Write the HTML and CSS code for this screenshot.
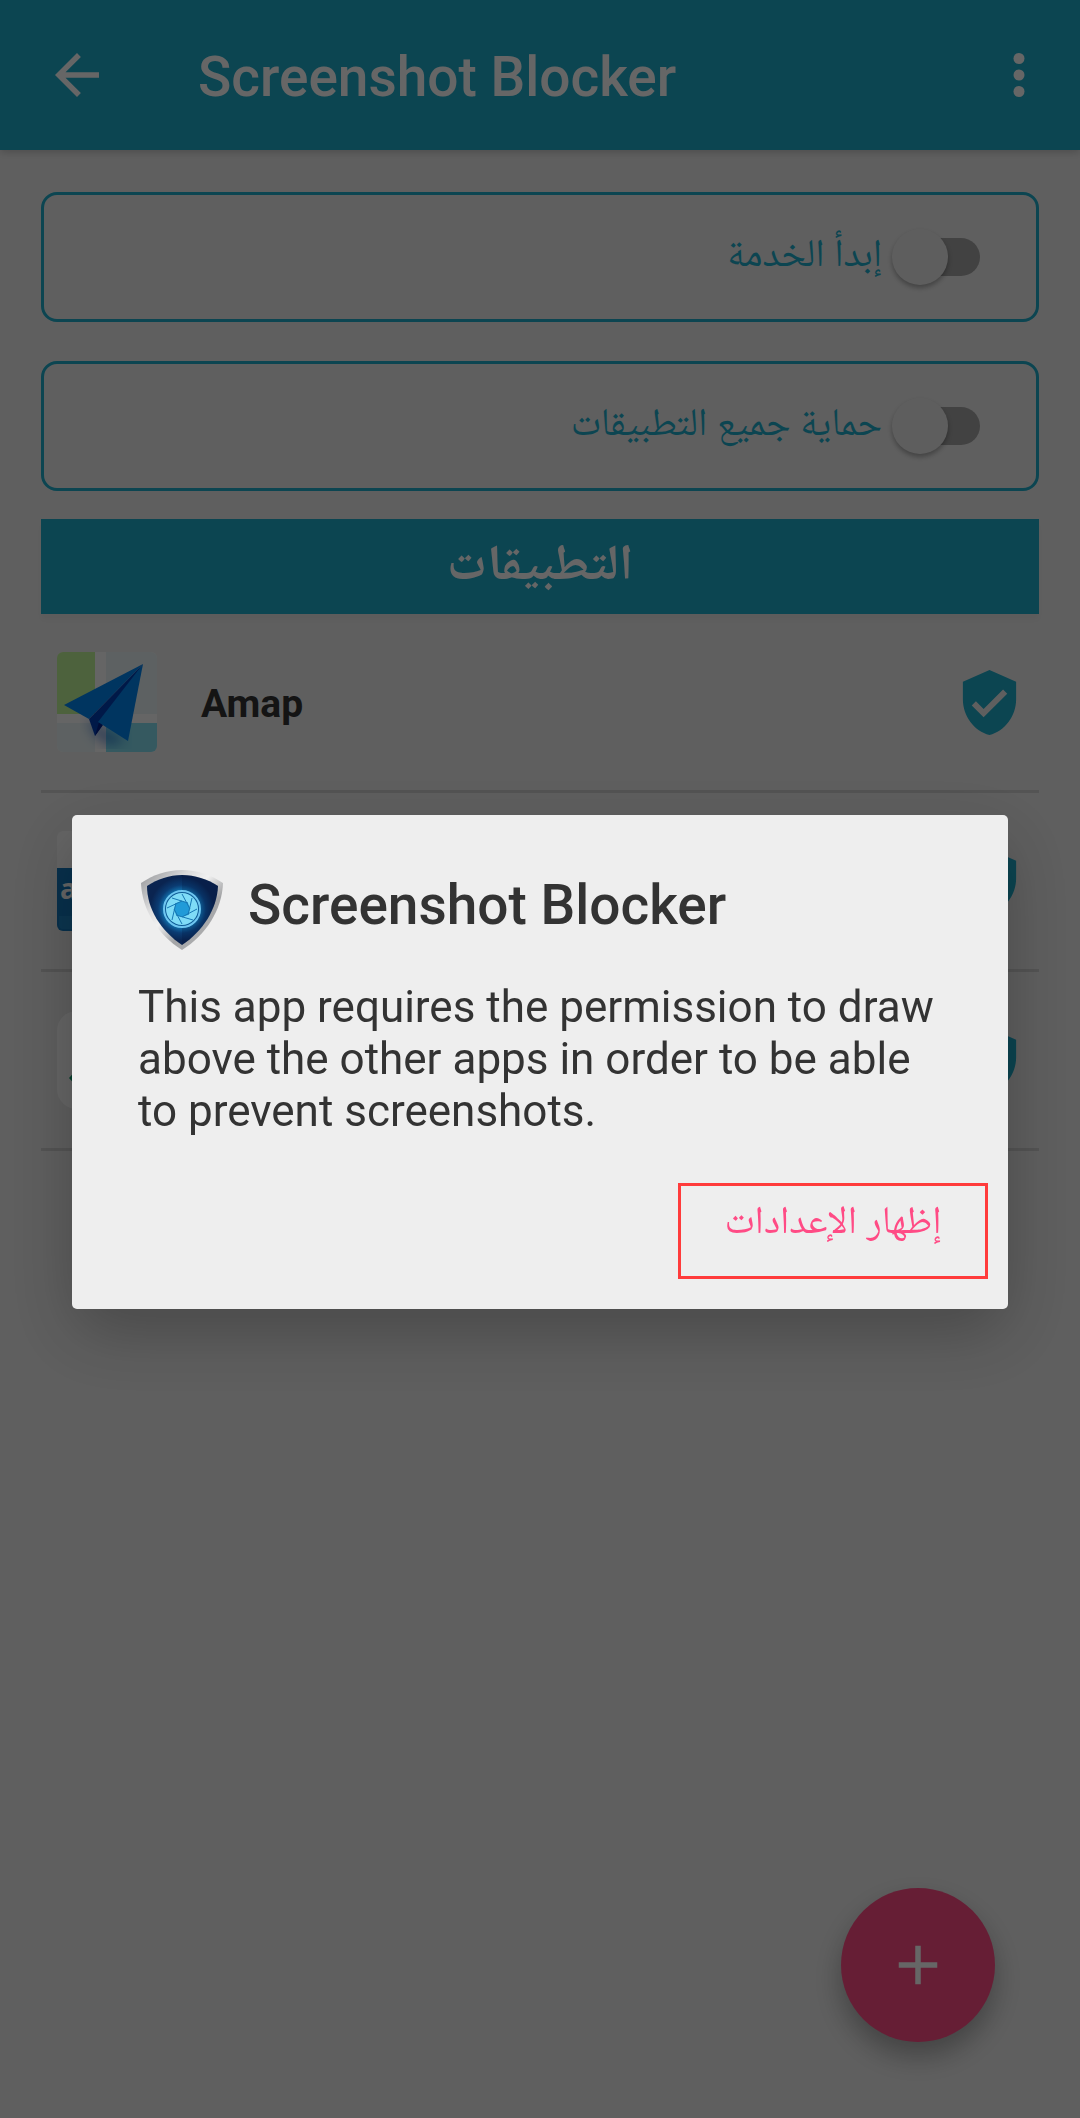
FILE: index.html
```html
<!DOCTYPE html>
<html lang="ar">
  <head>
    <meta charset="UTF-8" />
    <meta name="viewport" content="width=device-width, initial-scale=1.0" />
    <title>Screenshot Blocker</title>
    <link rel="stylesheet" href="styles.css">
  </head>
  <body>
    <header class="app-bar">
      <button type="button" class="icon-button" aria-label="Back">
        <svg viewBox="0 0 24 24"><path d="M20 11H7.83l5.59-5.59L12 4l-8 8 8 8 1.41-1.41L7.83 13H20v-2z" /></svg>
      </button>
      <h1>Screenshot Blocker</h1>
      <button type="button" class="icon-button" aria-label="More options">
        <svg viewBox="0 0 24 24">
          <circle cx="12" cy="6" r="2" />
          <circle cx="12" cy="12" r="2" />
          <circle cx="12" cy="18" r="2" />
        </svg>
      </button>
    </header>

    <main class="content">
      <div class="options">
        <label class="option" dir="rtl">
          <input type="checkbox" class="switch" />
          <span>إبدأ الخدمة</span>
        </label>
        <label class="option" dir="rtl">
          <input type="checkbox" class="switch" />
          <span>حماية جميع التطبيقات</span>
        </label>
      </div>

      <h2 class="section-title" dir="rtl">التطبيقات</h2>

      <ul class="app-list">
        <li class="app-row">
          <svg class="app-icon" viewBox="0 0 100 100">
            <defs>
              <clipPath id="amap-clip"><rect width="100" height="100" rx="6" /></clipPath>
              <filter id="amap-blur"><feGaussianBlur stdDeviation="6" /></filter>
            </defs>
            <g clip-path="url(#amap-clip)">
              <rect width="100" height="100" fill="#fcfcfc" />
              <rect width="38" height="62" fill="#c1f499" />
              <rect x="49" width="51" height="62" fill="#e8f3f5" />
              <rect y="71" width="38" height="29" fill="#e8f3f5" />
              <rect x="49" y="71" width="51" height="29" fill="#84dff0" />
              <path d="M28 66L70 88L52 94L38 84z" fill="#0048b8" opacity=".5" filter="url(#amap-blur)" />
              <path d="M86 12L7 53L32 67z" fill="#0084f0" />
              <path d="M86 12L32 67L38 84L46 72z" fill="#0040b4" />
              <path d="M38 84L42 70L46 73z" fill="#001f8c" />
              <path d="M86 12L41 70L71 89z" fill="#0084f0" />
            </g>
          </svg>
          <span class="app-name">Amap</span>
          <svg class="shield" viewBox="0 0 24 24"><path d="M12 1L3 5v6c0 5.550 3.840 10.740 9 12 5.160-1.260 9-6.450 9-12V5l-9-4zm-2 16l-4-4 1.410-1.410L10 14.170l6.590-6.590L18 9l-8 8z" /></svg>
        </li>
        <li class="app-row">
          <svg class="app-icon" viewBox="0 0 100 100">
            <path d="M0 37V6a6 6 0 0 1 6-6h88a6 6 0 0 1 6 6v31z" fill="#fcfcfc" />
            <path d="M0 37h100v57a6 6 0 0 1-6 6H6a6 6 0 0 1-6-6z" fill="#1379be" />
            <path d="M2 85h96v9a4 4 0 0 1-4 4H6a4 4 0 0 1-4-4z" fill="#1d86c8" />
            <text class="app-icon-text" x="3" y="68">a</text>
          </svg>
          <span class="app-name"></span>
          <svg class="shield" viewBox="0 0 24 24"><path d="M12 1L3 5v6c0 5.550 3.840 10.740 9 12 5.160-1.260 9-6.450 9-12V5l-9-4zm-2 16l-4-4 1.410-1.410L10 14.170l6.590-6.590L18 9l-8 8z" /></svg>
        </li>
        <li class="app-row">
          <svg class="app-icon" viewBox="0 0 100 100">
            <rect y="1" width="100" height="98" rx="20" fill="#ffffff" />
            <path d="M12 68L30 48V88z" fill="#10a070" />
          </svg>
          <span class="app-name"></span>
          <svg class="shield" viewBox="0 0 24 24"><path d="M12 1L3 5v6c0 5.550 3.840 10.740 9 12 5.160-1.260 9-6.450 9-12V5l-9-4zm-2 16l-4-4 1.410-1.410L10 14.170l6.590-6.590L18 9l-8 8z" /></svg>
        </li>
      </ul>
    </main>

    <button type="button" class="fab" aria-label="Add">
      <svg viewBox="0 0 24 24"><path d="M19 13h-6v6h-2v-6H5v-2h6V5h2v6h6v2z" /></svg>
    </button>

    <div class="scrim">
      <section class="dialog" role="dialog" aria-modal="true" aria-labelledby="dialog-title">
        <div class="dialog-header">
          <svg class="dialog-icon" viewBox="0 0 82 80">
            <defs>
              <linearGradient id="rim" x1="0" y1="0" x2="1" y2="1">
                <stop offset="0" stop-color="#8f9194" />
                <stop offset=".3" stop-color="#dcdcdd" />
                <stop offset=".45" stop-color="#f1f1f1" />
                <stop offset=".65" stop-color="#a3a4a6" />
                <stop offset="1" stop-color="#b9babb" />
              </linearGradient>
              <radialGradient id="glow" cx="41" cy="39" r="32" gradientUnits="userSpaceOnUse">
                <stop offset=".5" stop-color="#1384c2" />
                <stop offset=".75" stop-color="#0b3c73" />
                <stop offset="1" stop-color="#0a2450" />
              </radialGradient>
            </defs>
            <path d="M41 0C56 0 70 5 82 13C81 40 65 65 41 80C17 65 1 40 0 13C12 5 26 0 41 0z" fill="url(#rim)" />
            <path d="M41 5C54 5 66 9 77 16C76 39 62 61 41 75C20 61 6 39 6 16C17 9 28 5 41 5z" fill="url(#glow)" />
            <path d="M41 5C54 5 66 9 77 16C76 39 62 61 41 75z" fill="#001030" opacity=".2" />
            <circle cx="41" cy="39" r="18" fill="#0f5c96" stroke="#6ec6f0" stroke-width="2" />
            <circle cx="41" cy="39" r="16" fill="#7fdcf7" />
            <path d="M41 31L47 33L49 39L47 45L41 47L35 45L33 39L35 33z" fill="#219bd8" />
            <path d="M47 33L31 28M49 39L41 24M47 45L51 28M41 47L56 39M35 45L52 50M33 39L41 54M35 33L31 50M41 31L26 38" stroke="#1677b4" stroke-width="1" />
          </svg>
          <h2 id="dialog-title">Screenshot Blocker</h2>
        </div>
        <p>This app requires the permission to draw above the other apps in order to be able to prevent screenshots.</p>
        <button type="button" class="dialog-action" dir="rtl">إظهار الإعدادات</button>
      </section>
    </div>
  </body>
</html>
```

FILE: styles.css
```css
* {
  box-sizing: border-box;
}

body {
  font-family: Roboto, "Noto Naskh Arabic", "DejaVu Sans", sans-serif;
  background-color: #eeeeee;
  margin: 0;
  min-height: 100vh;
}

h1,
h2,
p,
ul {
  margin: 0;
  padding: 0;
}

button {
  font-family: inherit;
  border: none;
  cursor: pointer;
}

svg {
  display: block;
  flex: none;
}

.app-bar {
  display: flex;
  align-items: center;
  height: 150px;
  padding: 0 28px 0 44px;
  background-color: #1eaccb;
  color: white;
  box-shadow: 0 2px 8px rgba(0, 0, 0, 0.2);
}

.app-bar h1 {
  flex: 1;
  padding: 4px 0 0 88px;
  font-size: 55px;
  font-weight: 500;
}

.icon-button {
  padding: 0;
  background: none;
  color: inherit;
}

.icon-button svg {
  width: 66px;
  height: 66px;
  fill: currentColor;
}

.content {
  padding: 42px 41px;
}

.options {
  display: flex;
  flex-direction: column;
  gap: 39px;
}

.option {
  display: flex;
  align-items: center;
  gap: 10px;
  height: 130px;
  padding: 0 56px;
  border: 3px solid #1eaccb;
  border-radius: 16px;
  color: #1eaccb;
  font-size: 39px;
}

.switch {
  appearance: none;
  display: flex;
  flex: none;
  align-items: center;
  width: 88px;
  height: 56px;
  margin: 0;
}

.switch::before {
  content: "";
  flex: 1;
  height: 38px;
  margin-left: -44px;
  border-radius: 19px;
  background-color: #a5a5a5;
}

.switch::after {
  content: "";
  width: 56px;
  height: 56px;
  border-radius: 50%;
  background-color: #ececec;
  box-shadow: 0 3px 5px rgba(0, 0, 0, 0.3);
}

.section-title {
  height: 95px;
  margin-top: 28px;
  background-color: #1eaccb;
  color: white;
  font-size: 50px;
  line-height: 86px;
  text-align: center;
  box-shadow: 0 6px 6px rgba(0, 0, 0, 0.04);
}

.app-list {
  list-style: none;
}

.app-row {
  display: flex;
  align-items: center;
  gap: 44px;
  height: 179px;
  padding: 0 14px 0 16px;
  border-bottom: 3px solid #d2d2d2;
}

.app-icon {
  width: 100px;
  height: 100px;
}

.app-icon-text {
  font-family: "Open Sans", sans-serif;
  font-size: 28px;
  font-weight: bold;
  fill: white;
}

.app-name {
  flex: 1;
  padding-top: 4px;
  color: #333333;
  font-size: 39px;
  font-weight: bold;
}

.shield {
  width: 71px;
  height: 71px;
  fill: #1eaccb;
}

.fab {
  position: fixed;
  right: 85px;
  bottom: 76px;
  display: grid;
  place-items: center;
  width: 154px;
  height: 154px;
  padding: 0;
  border-radius: 50%;
  background-color: #ff4b85;
  color: white;
  box-shadow: 0 14px 28px rgba(0, 0, 0, 0.3);
}

.fab svg {
  width: 66px;
  height: 66px;
  fill: currentColor;
}

.scrim {
  position: fixed;
  inset: 0;
  display: flex;
  align-items: center;
  justify-content: center;
  padding: 6px 72px 0;
  background-color: rgba(0, 0, 0, 0.6);
}

.dialog {
  display: flex;
  flex-direction: column;
  width: 100%;
  padding: 55px 20px 30px 66px;
  border-radius: 5px;
  background-color: #eeeeee;
  color: #333333;
  box-shadow: 0 24px 70px rgba(0, 0, 0, 0.25);
}

.dialog-header {
  display: flex;
  gap: 25px;
  height: 80px;
  padding-left: 3px;
}

.dialog-header h2 {
  font-size: 55px;
  font-weight: 500;
  line-height: 70px;
}

.dialog-icon {
  width: 82px;
  height: 80px;
}

.dialog p {
  margin: 31px 46px 46px 0;
  font-size: 44px;
  line-height: 52px;
}

.dialog-action {
  align-self: flex-end;
  min-width: 310px;
  height: 96px;
  padding: 0 40px 14px;
  border: 3px solid #ff3b3b;
  background: none;
  color: #ff4b85;
  font-size: 39px;
}
```
